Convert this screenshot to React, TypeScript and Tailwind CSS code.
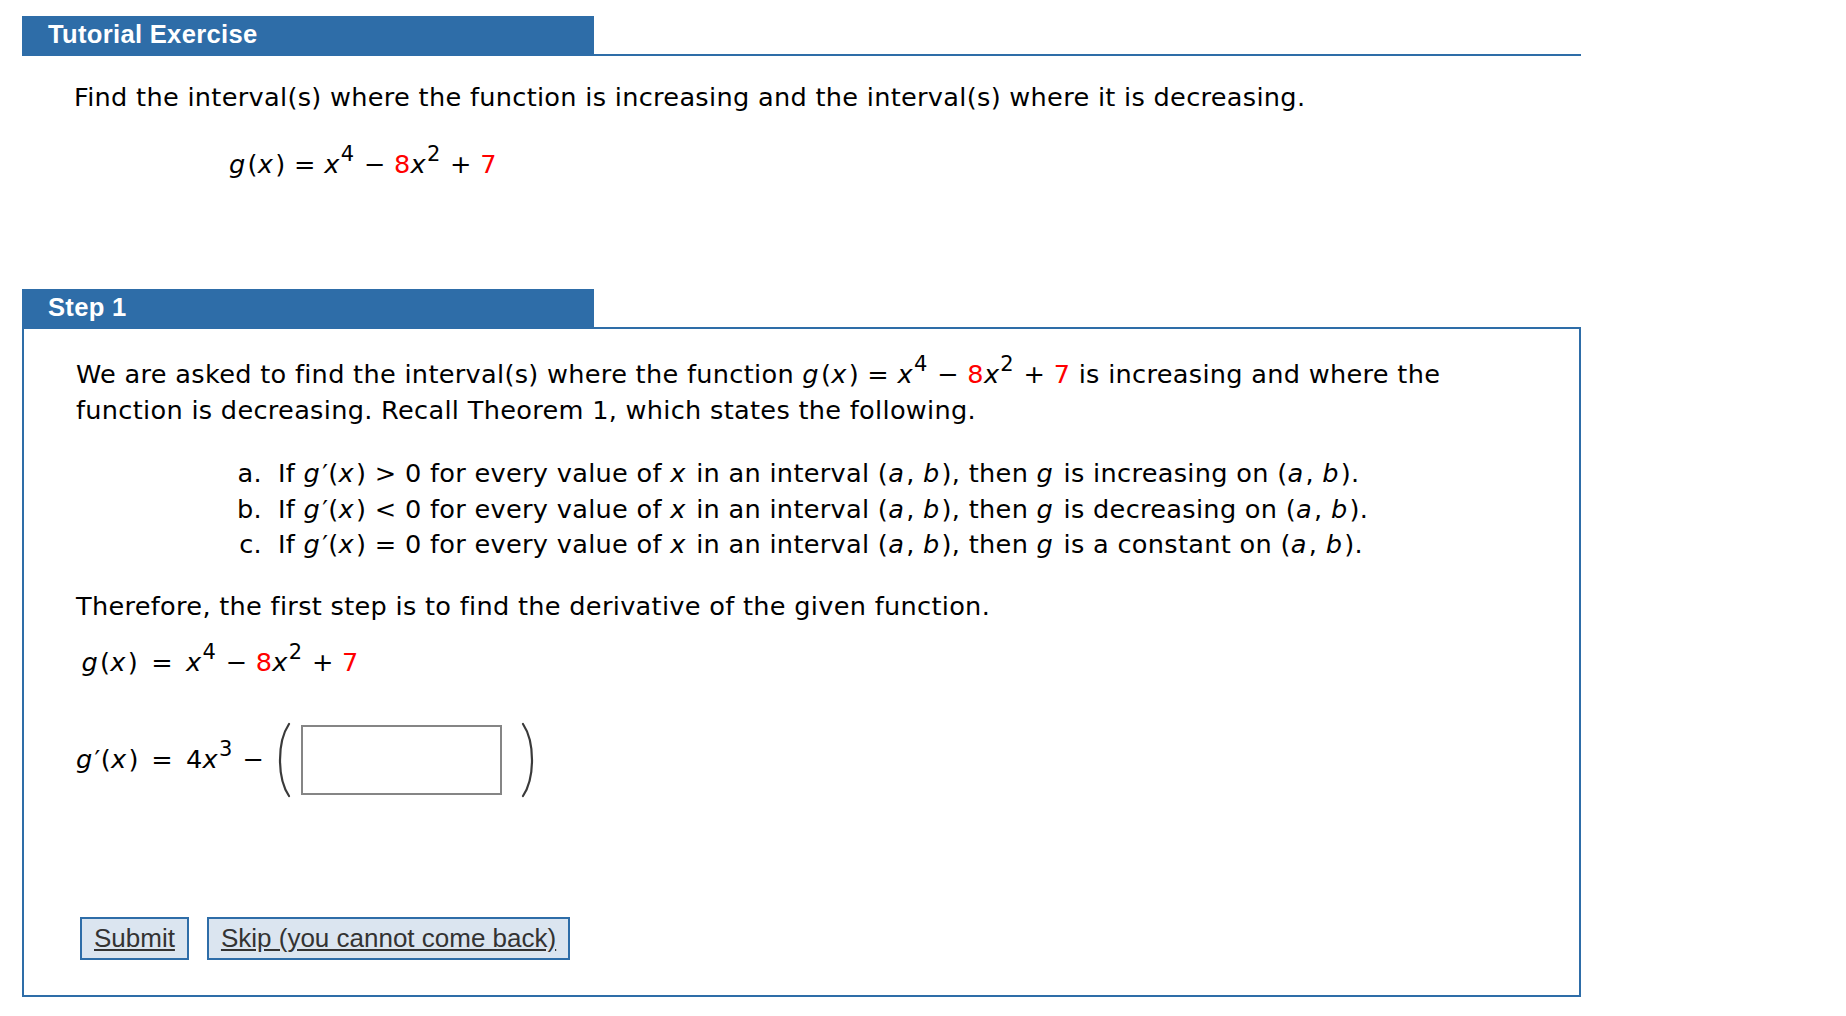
import type { ReactNode } from "react";

// math helpers
function V({ children }: { children: ReactNode }) {
  return <i className="pr-[2px] italic">{children}</i>;
}

function Sup({ children }: { children: ReactNode }) {
  return <span className="relative -top-[12px] -ml-[1px] pr-[1px] text-[21px] leading-none">{children}</span>;
}

function R({ children }: { children: ReactNode }) {
  return <span className="text-[#ff0000]">{children}</span>;
}

function Gx() {
  return (
    <>
      <V>g</V>(<V>x</V>) = <V>x</V>
      <Sup>4</Sup> − <R>8</R>
      <V>x</V>
      <Sup>2</Sup> + <R>7</R>
    </>
  );
}

function SectionBar({ title }: { title: string }) {
  return (
    <div className="flex items-end">
      <div className="h-[40px] w-[572px] bg-[#2e6da8] pl-[26px] font-['Liberation_Sans',Arial,sans-serif] text-[25.6px] font-bold leading-[37px] text-white">
        {title}
      </div>
      <div className="h-[2px] flex-1 bg-[#2e6da8]" />
    </div>
  );
}

function Paren({ right = false }: { right?: boolean }) {
  return (
    <svg width="18" height="76" viewBox="0 0 18 76" className="shrink-0">
      <path
        d={right ? "M3 2 C 15 20, 15 56, 3 74" : "M15 2 C 3 20, 3 56, 15 74"}
        fill="none"
        stroke="#3a3a3a"
        strokeWidth="2.2"
        strokeLinecap="round"
      />
    </svg>
  );
}

function TheoremItem({ mark, children }: { mark: string; children: ReactNode }) {
  return (
    <>
      <div className="text-right">{mark}</div>
      <div>{children}</div>
    </>
  );
}

export default function App() {
  return (
    <div className="min-h-screen bg-white pl-[22px] pt-[16px] font-['DejaVu_Sans',Verdana,sans-serif] text-[25.6px] leading-[35.5px] tracking-[0.3px] text-black">
      <div className="w-[1559px]">
        {/* Exercise */}
        <SectionBar title="Tutorial Exercise" />
        <p className="mt-[24px] pl-[52px]">
          Find the interval(s) where the function is increasing and the interval(s) where it is decreasing.
        </p>
        <p className="mt-[31px] pl-[207px] whitespace-nowrap">
          <Gx />
        </p>

        {/* Step 1 */}
        <div className="mt-[107px]">
          <SectionBar title="Step 1" />
          <div className="border-x-2 border-b-2 border-[#2e6da8] pb-[35px] pl-[52px] pt-[28px]">
            <p>
              We are asked to find the interval(s) where the function <Gx /> is increasing and where the
              <br />
              function is decreasing. Recall Theorem 1, which states the following.
            </p>

            <div className="mt-[28px] grid grid-cols-[186px_1fr] gap-x-[16px]">
              <TheoremItem mark="a.">
                If <V>g</V>′(<V>x</V>) &gt; 0 for every value of <V>x</V> in an interval (<V>a</V>, <V>b</V>), then{" "}
                <V>g</V> is increasing on (<V>a</V>, <V>b</V>).
              </TheoremItem>
              <TheoremItem mark="b.">
                If <V>g</V>′(<V>x</V>) &lt; 0 for every value of <V>x</V> in an interval (<V>a</V>, <V>b</V>), then{" "}
                <V>g</V> is decreasing on (<V>a</V>, <V>b</V>).
              </TheoremItem>
              <TheoremItem mark="c.">
                If <V>g</V>′(<V>x</V>) = 0 for every value of <V>x</V> in an interval (<V>a</V>, <V>b</V>), then{" "}
                <V>g</V> is a constant on (<V>a</V>, <V>b</V>).
              </TheoremItem>
            </div>

            <p className="mt-[26px]">Therefore, the first step is to find the derivative of the given function.</p>

            <div className="mt-[21px] grid grid-cols-[62px_34px_auto] items-center gap-x-[7px] gap-y-[41px]">
              <div className="text-right whitespace-nowrap">
                <V>g</V>(<V>x</V>)
              </div>
              <div className="text-center">=</div>
              <div className="whitespace-nowrap">
                <V>x</V>
                <Sup>4</Sup> − <R>8</R>
                <V>x</V>
                <Sup>2</Sup> + <R>7</R>
              </div>

              <div className="text-right whitespace-nowrap">
                <V>g</V>′(<V>x</V>)
              </div>
              <div className="text-center">=</div>
              <div className="flex items-center">
                <span className="whitespace-nowrap">
                  4<V>x</V>
                  <Sup>3</Sup> −
                </span>
                <span className="ml-[10px]">
                  <Paren />
                </span>
                <input
                  type="text"
                  className="ml-[9px] h-[70px] w-[201px] border-2 border-[#858585] bg-white px-2 outline-none"
                />
                <span className="ml-[18px]">
                  <Paren right />
                </span>
              </div>
            </div>

            <div className="ml-[4px] mt-[119px] flex gap-[18px] font-['Liberation_Sans',Arial,sans-serif] text-[26px] tracking-normal text-[#333333]">
              <button className="h-[43px] border-2 border-[#2e6da8] bg-[#dbe5f0] px-[12px] leading-[38px] underline">
                Submit
              </button>
              <button className="h-[43px] border-2 border-[#2e6da8] bg-[#dbe5f0] px-[12px] leading-[38px] underline">
                Skip (you cannot come back)
              </button>
            </div>
          </div>
        </div>
      </div>
    </div>
  );
}
